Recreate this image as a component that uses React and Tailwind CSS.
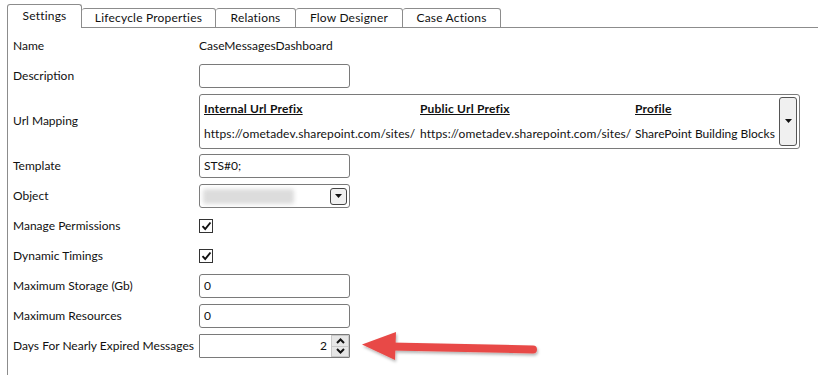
import React from 'react';

const font = { fontFamily: 'Lato, "Liberation Sans", sans-serif' };

const tabs = [
  { name: 'Lifecycle Properties', w: 'w-[134px]' },
  { name: 'Relations', w: 'w-[80px]' },
  { name: 'Flow Designer', w: 'w-[107px]' },
  { name: 'Case Actions', w: 'w-[98px]' },
];

const TextBox = ({ value = '' }) => (
  <div className="flex h-[24px] w-[151px] items-center rounded-[3px] border border-[#7a7a7a] bg-white px-[4px]">
    <span className="flex-1">{value}</span>
  </div>
);

const Check = () => (
  <div className="flex h-[14px] w-[14px] items-center justify-center border border-[#333] bg-white">
    <svg width="11" height="10" viewBox="0 0 11 10">
      <path d="M1.5 5.2 L4.2 8 L9.5 1.5" fill="none" stroke="#111" strokeWidth="1.9" />
    </svg>
  </div>
);

const Row = ({ label, h = 'h-[30px]', children }) => (
  <div className={`flex ${h} items-center`}>
    <div className="w-[186px] shrink-0 whitespace-nowrap">{label}</div>
    <div className="flex items-center">{children}</div>
  </div>
);

export default function App() {
  return (
    <div className="relative h-[375px] w-[818px] overflow-hidden bg-white text-[12px] text-[#111]" style={font}>
      {/* tab strip */}
      <div className="flex h-[28px] items-end pl-[7px]">
        <div className="flex h-[24px] w-[75px] items-center justify-center rounded-t-[3px] border border-b-0 border-[#8c8c8c] bg-white pb-[1px] tracking-[0.2px]">
          Settings
        </div>
        {tabs.map((t) => (
          <div
            key={t.name}
            className={`flex h-[20px] ${t.w} items-center justify-center whitespace-nowrap rounded-t-[3px] border border-l-0 border-[#8c8c8c] bg-white tracking-[0.2px]`}
          >
            {t.name}
          </div>
        ))}
        <div className="flex-1 border-b border-[#8c8c8c]" />
      </div>

      {/* settings panel */}
      <div className="ml-[7px] h-[347px] border-l border-[#8c8c8c] pl-[5px] pt-[3px]">
        <Row label="Name">CaseMessagesDashboard</Row>
        <Row label="Description"><TextBox /></Row>
        <Row label="Url Mapping" h="h-[60px]">
          <div className="flex h-[55px] w-[601px] items-center rounded-[3px] border border-[#7a7a7a] bg-white pl-[4px] pr-[2px]">
            <div className="grid flex-1 grid-cols-[216px_215px_1fr] grid-rows-[25px_25px] items-center whitespace-nowrap pt-[1px]">
              <span className="font-bold underline tracking-[0.2px]">Internal Url Prefix</span>
              <span className="font-bold underline tracking-[0.2px]">Public Url Prefix</span>
              <span className="font-bold underline tracking-[0.2px]">Profile</span>
              <span className="tracking-[0.1px]">https://ometadev.sharepoint.com/sites/</span>
              <span className="tracking-[0.1px]">https://ometadev.sharepoint.com/sites/</span>
              <span>SharePoint Building Blocks</span>
            </div>
            <div className="flex h-[49px] w-[18px] items-center justify-center rounded-[3px] border border-[#555] bg-[#f0f0f0]">
              <svg width="7" height="4" viewBox="0 0 7 4"><path d="M0 0 H7 L3.5 4 Z" fill="#111" /></svg>
            </div>
          </div>
        </Row>
        <Row label="Template"><TextBox value="STS#0;" /></Row>
        <Row label="Object">
          <div className="flex h-[24px] w-[151px] items-center rounded-[3px] border border-[#7a7a7a] bg-white pl-[3px] pr-[2px]">
            <div className="h-[15px] w-[91px] rounded-[2px] bg-[#dcdcdc] blur-[2px]" />
            <div className="flex-1" />
            <div className="flex h-[17px] w-[17px] items-center justify-center rounded-[3px] border border-[#444] bg-[#f0f0f0]">
              <svg width="7" height="4" viewBox="0 0 7 4"><path d="M0 0 H7 L3.5 4 Z" fill="#111" /></svg>
            </div>
          </div>
        </Row>
        <Row label="Manage Permissions"><Check /></Row>
        <Row label="Dynamic Timings"><Check /></Row>
        <Row label="Maximum Storage (Gb)"><TextBox value="0" /></Row>
        <Row label="Maximum Resources"><TextBox value="0" /></Row>
        <Row label="Days For Nearly Expired Messages">
          <div className="flex h-[24px] w-[151px] items-center rounded-[1px] border border-[#7a7a7a] bg-white pl-[4px]">
            <span className="flex-1 pr-[4px] text-right">2</span>
            <div className="flex h-full w-[18px] flex-col gap-[1px] bg-[#c8c8c8] p-[1px]">
              <div className="flex flex-1 items-center justify-center bg-[#e6e6e6]">
                <svg width="9" height="6" viewBox="0 0 9 6"><path d="M1 5 L4.5 1.5 L8 5" fill="none" stroke="#111" strokeWidth="2" /></svg>
              </div>
              <div className="flex flex-1 items-center justify-center bg-[#e6e6e6]">
                <svg width="9" height="6" viewBox="0 0 9 6"><path d="M1 1 L4.5 4.5 L8 1" fill="none" stroke="#111" strokeWidth="2" /></svg>
              </div>
            </div>
          </div>
        </Row>
      </div>

      {/* annotation arrow */}
      <svg className="absolute left-[355px] top-[325px]" width="200" height="45" viewBox="0 0 200 45">
        <defs>
          <filter id="sh" x="-10%" y="-40%" width="120%" height="180%">
            <feDropShadow dx="1" dy="2" stdDeviation="1.6" floodColor="#000" floodOpacity="0.3" />
          </filter>
        </defs>
        <g filter="url(#sh)">
          <path d="M36 21.5 L178 24.5" stroke="#e84a47" strokeWidth="8" strokeLinecap="round" fill="none" />
          <path d="M7 19.5 L41 7 L40 35 Z" fill="#e84a47" />
        </g>
      </svg>
    </div>
  );
}
